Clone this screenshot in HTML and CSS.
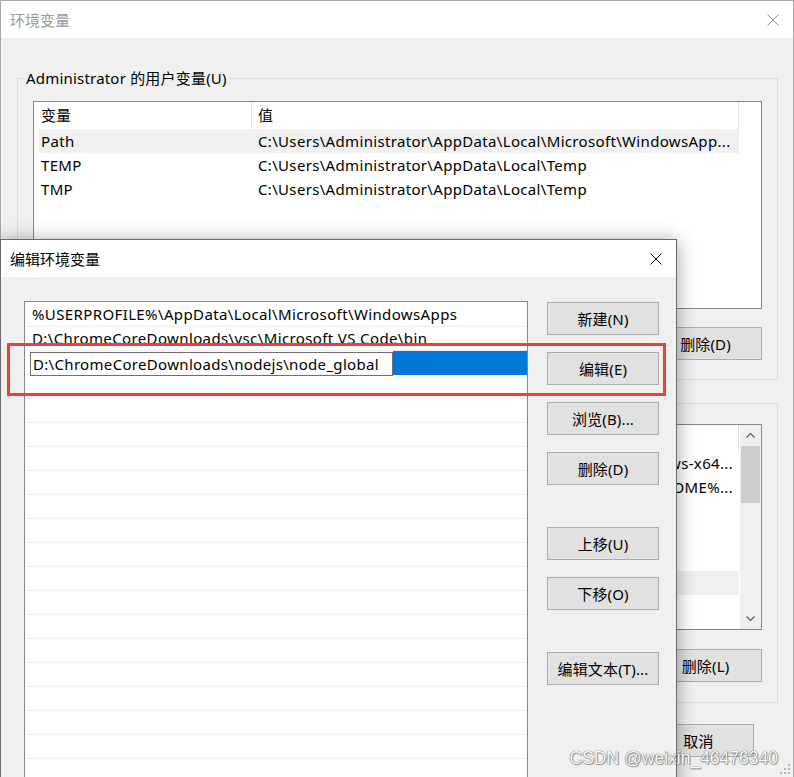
FILE: index.html
```html
<!DOCTYPE html>
<html lang="zh-CN">
<head>
<meta charset="utf-8">
<title>环境变量</title>
<link rel="stylesheet" href="styles.css">
</head>
<body>
<div class="win main">
  <div class="titlebar">
    <span class="title">环境变量</span>
    <svg class="close" viewBox="0 0 12 12" width="12" height="12"><path d="M0.5 0.5L11.5 11.5M11.5 0.5L0.5 11.5" stroke="#8c8c8c" stroke-width="1" fill="none"/></svg>
  </div>
  <div class="main-body">
    <fieldset class="group g1">
      <legend>Administrator 的用户变量(U)</legend>
      <div class="listview user">
        <div class="lv-head"><div class="c1">变量</div><div class="c2">值</div></div>
        <div class="lv-row hl"><div class="c1">Path</div><div class="c2">C:\Users\Administrator\AppData\Local\Microsoft\WindowsApp...</div></div>
        <div class="lv-row"><div class="c1">TEMP</div><div class="c2">C:\Users\Administrator\AppData\Local\Temp</div></div>
        <div class="lv-row"><div class="c1">TMP</div><div class="c2">C:\Users\Administrator\AppData\Local\Temp</div></div>
      </div>
      <div class="btnrow">
        <button class="btn">新建(N)...</button>
        <button class="btn">编辑(E)...</button>
        <button class="btn">删除(D)</button>
      </div>
    </fieldset>
    <fieldset class="group g2">
      <legend>系统变量(S)</legend>
      <div class="listview sys">
        <div class="lv-cols">
          <div class="lv-head"><div class="c1">变量</div><div class="c2">值</div></div>
          <div class="lv-row"><div class="c1">CHROME_JDK</div><div class="c2 tail"><span>D:\ChromeCoreDownloads\jdk\openjdk-17.0.2_windows-x64...</span></div></div>
          <div class="lv-row"><div class="c1">CLASSPATH</div><div class="c2 tail"><span>.;%JAVA_HOME%\lib\dt.jar;%JAVA_HOME%\lib\tools.jar;%JAVA_HOME%...</span></div></div>
          <div class="lv-row"><div class="c1">ComSpec</div><div class="c2">C:\Windows\system32\cmd.exe</div></div>
          <div class="lv-row"><div class="c1">DriverData</div><div class="c2">C:\Windows\System32\Drivers\DriverData</div></div>
          <div class="lv-row"><div class="c1">JAVA_HOME</div><div class="c2">C:\Program Files\Java\jdk1.8.0_201</div></div>
          <div class="lv-row hl"><div class="c1">NUMBER_OF_PROCESSORS</div><div class="c2">8</div></div>
          <div class="lv-row"><div class="c1">OS</div><div class="c2">Windows_NT</div></div>
        </div>
        <div class="vscroll">
          <div class="arrow"><svg viewBox="0 0 9 5" width="9" height="5"><path d="M0.5 4.5L4.5 0.5L8.5 4.5" stroke="#606060" stroke-width="1.2" fill="none"/></svg></div>
          <div class="thumb"></div>
          <div class="track"></div>
          <div class="arrow"><svg viewBox="0 0 9 5" width="9" height="5"><path d="M0.5 0.5L4.5 4.5L8.5 0.5" stroke="#606060" stroke-width="1.2" fill="none"/></svg></div>
        </div>
      </div>
      <div class="btnrow">
        <button class="btn">新建(W)...</button>
        <button class="btn">编辑(I)...</button>
        <button class="btn">删除(L)</button>
      </div>
    </fieldset>
    <div class="okrow">
      <button class="btn ok">确定</button>
      <button class="btn ok">取消</button>
    </div>
  </div>
  <svg class="grip" viewBox="0 0 12 12" width="12" height="12">
    <rect x="9" y="1" width="2" height="2" fill="#b4b4b4"/>
    <rect x="9" y="5" width="2" height="2" fill="#b4b4b4"/>
    <rect x="5" y="5" width="2" height="2" fill="#b4b4b4"/>
    <rect x="9" y="9" width="2" height="2" fill="#b4b4b4"/>
    <rect x="5" y="9" width="2" height="2" fill="#b4b4b4"/>
    <rect x="1" y="9" width="2" height="2" fill="#b4b4b4"/>
  </svg>
</div>

<div class="win dialog">
  <div class="titlebar">
    <span class="title">编辑环境变量</span>
    <svg class="close" viewBox="0 0 12 12" width="12" height="12"><path d="M0.5 0.5L11.5 11.5M11.5 0.5L0.5 11.5" stroke="#000" stroke-width="1" fill="none"/></svg>
  </div>
  <div class="dlg-body">
    <div class="elist">
      <div class="erow">%USERPROFILE%\AppData\Local\Microsoft\WindowsApps</div>
      <div class="erow">D:\ChromeCoreDownloads\vsc\Microsoft VS Code\bin</div>
      <div class="erow editing"><div class="editbox">D:\ChromeCoreDownloads\nodejs\node_global</div><div class="selfill"></div></div>
      <div class="erow"></div>
      <div class="erow"></div>
      <div class="erow"></div>
      <div class="erow"></div>
      <div class="erow"></div>
      <div class="erow"></div>
      <div class="erow"></div>
      <div class="erow"></div>
      <div class="erow"></div>
      <div class="erow"></div>
      <div class="erow"></div>
      <div class="erow"></div>
      <div class="erow"></div>
      <div class="erow"></div>
      <div class="erow"></div>
      <div class="erow"></div>
      <div class="erow"></div>
      <div class="erow"></div>
    </div>
    <div class="dlg-btns">
      <button class="btn">新建(N)</button>
      <button class="btn">编辑(E)</button>
      <button class="btn">浏览(B)...</button>
      <button class="btn spaced">删除(D)</button>
      <button class="btn">上移(U)</button>
      <button class="btn spaced">下移(O)</button>
      <button class="btn">编辑文本(T)...</button>
    </div>
  </div>
</div>

<div class="mark"></div>
<div class="wm">CSDN @weixin_46476340</div>
</body>
</html>
```

FILE: styles.css
```css
* { box-sizing: border-box; }
html, body { margin: 0; padding: 0; }
body {
  width: 794px;
  height: 777px;
  overflow: hidden;
  position: relative;
  background: #f0f0f0;
  font-family: "Noto Sans", "Noto Sans CJK SC", sans-serif;
  font-size: 15px;
  color: #000;
}

.win { background: #f0f0f0; }

.main {
  width: 794px;
  height: 777px;
  border: 1px solid #a8a8a8;
  border-bottom: none;
  display: flex;
  flex-direction: column;
  position: relative;
}

.titlebar {
  height: 37px;
  flex: none;
  background: #fff;
  display: flex;
  align-items: center;
  justify-content: space-between;
  padding: 0 14px 0 9px;
}
.main .title { color: #9a9a9a; }
.close { display: block; flex: none; }

.main-body { padding: 30px 15px 0 16px; }

.group {
  margin: 0;
  border: 1px solid #dcdcdc;
  padding: 0 15px 19px 15px;
  min-width: 0;
}
.group legend {
  padding: 0 2px;
  margin-left: -9px;
  height: 20px;
  line-height: 20px;
  letter-spacing: 0.2px;
}
.g2 { margin-top: 13px; padding-bottom: 20px; }

.listview {
  background: #fff;
  border: 1px solid #828790;
  width: 729px;
  overflow: hidden;
  padding-left: 5px;
}
.listview.user { height: 208px; margin-top: 13px; }
.listview.sys { height: 206px; margin-top: 11px; display: flex; }

.lv-cols { width: 700px; flex: none; }
.lv-head { display: flex; height: 27px; line-height: 27px; }
.sys .lv-head { height: 26px; line-height: 26px; }
.lv-head .c1, .lv-head .c2 { border-right: 1px solid #e5e5e5; }

.lv-row { display: flex; width: 700px; height: 24px; line-height: 24px; letter-spacing: 0.33px; }
.lv-row.hl { background: #f0f0f0; }

.c1 { width: 213px; flex: none; padding-left: 2px; white-space: nowrap; overflow: hidden; }
.c2 { width: 487px; flex: none; padding-left: 6px; white-space: nowrap; overflow: hidden; }
.c2.tail { display: flex; justify-content: flex-end; padding-right: 6px; }
.c2.tail span { flex: none; }

.vscroll {
  margin-left: auto;
  width: 21px;
  flex: none;
  background: #f0f0f0;
  display: flex;
  flex-direction: column;
}
.vscroll .arrow {
  height: 21px;
  flex: none;
  display: flex;
  align-items: center;
  justify-content: center;
}
.vscroll .thumb { height: 57px; flex: none; margin: 0 1px 0 1px; background: #cdcdcd; }
.vscroll .track { flex: 1; }

.btn {
  font: inherit;
  color: #000;
  background: #e1e1e1;
  border: 1px solid #adadad;
  border-radius: 0;
  height: 33px;
  padding: 0;
  margin: 0;
  white-space: nowrap;
  letter-spacing: 0.15px;
}

.btnrow {
  display: flex;
  justify-content: flex-end;
  gap: 8px;
  margin-top: 18px;
}
.g2 .btnrow { margin-top: 19px; }
.btnrow .btn { width: 113px; }

.okrow {
  display: flex;
  justify-content: flex-end;
  gap: 8px;
  margin-top: 21px;
  padding-right: 24px;
}
.okrow .btn { width: 111px; }

.grip { position: absolute; right: 2px; bottom: 2px; }

/* child dialog */
.dialog {
  position: absolute;
  left: 0;
  top: 239px;
  width: 677px;
  height: 560px;
  border: 1px solid #6b6b6b;
  box-shadow: 0 2px 18px rgba(0, 0, 0, 0.38);
  display: flex;
  flex-direction: column;
}
.dlg-body {
  flex: 1;
  display: flex;
  gap: 19px;
  padding: 24px 17px 0 23px;
}
.elist {
  width: 504px;
  flex: none;
  background: #fff;
  border: 1px solid #828790;
  border-bottom: none;
  padding-top: 1px;
  overflow: hidden;
}
.erow {
  height: 24px;
  line-height: 23px;
  margin-left: 1px;
  padding-left: 6px;
  border-bottom: 1px solid #ededed;
  white-space: nowrap;
  overflow: hidden;
  letter-spacing: 0.38px;
}
.erow.editing {
  display: flex;
  align-items: flex-start;
  padding-left: 4px;
  overflow: visible;
}
.editbox {
  width: 363px;
  height: 24px;
  margin-top: 1px;
  flex: none;
  background: #fff;
  border: 1px solid #6e6e6e;
  padding-left: 2px;
  line-height: 22px;
  white-space: nowrap;
  overflow: hidden;
  letter-spacing: 0.32px;
}
.selfill { flex: 1; height: 24px; background: #0078d7; }

.dlg-btns {
  width: 112px;
  flex: none;
  display: flex;
  flex-direction: column;
  gap: 17px;
  padding-top: 1px;
}
.dlg-btns .btn { width: 112px; }
.dlg-btns .spaced { margin-bottom: 25px; }

/* screenshot annotation */
.mark {
  position: absolute;
  left: 7px;
  top: 343px;
  width: 659px;
  height: 53px;
  border: 3px solid #f23b3b;
}

.wm {
  position: absolute;
  right: 16px;
  top: 747px;
  font-family: "Liberation Sans", Arial, sans-serif;
  font-size: 17.5px;
  line-height: 22px;
  color: #fafafa;
  text-shadow: 0 0 1px #6a6a6a, 0 0 1px #6a6a6a, 1px 1px 1px rgba(0, 0, 0, 0.35);
  white-space: nowrap;
}
```
